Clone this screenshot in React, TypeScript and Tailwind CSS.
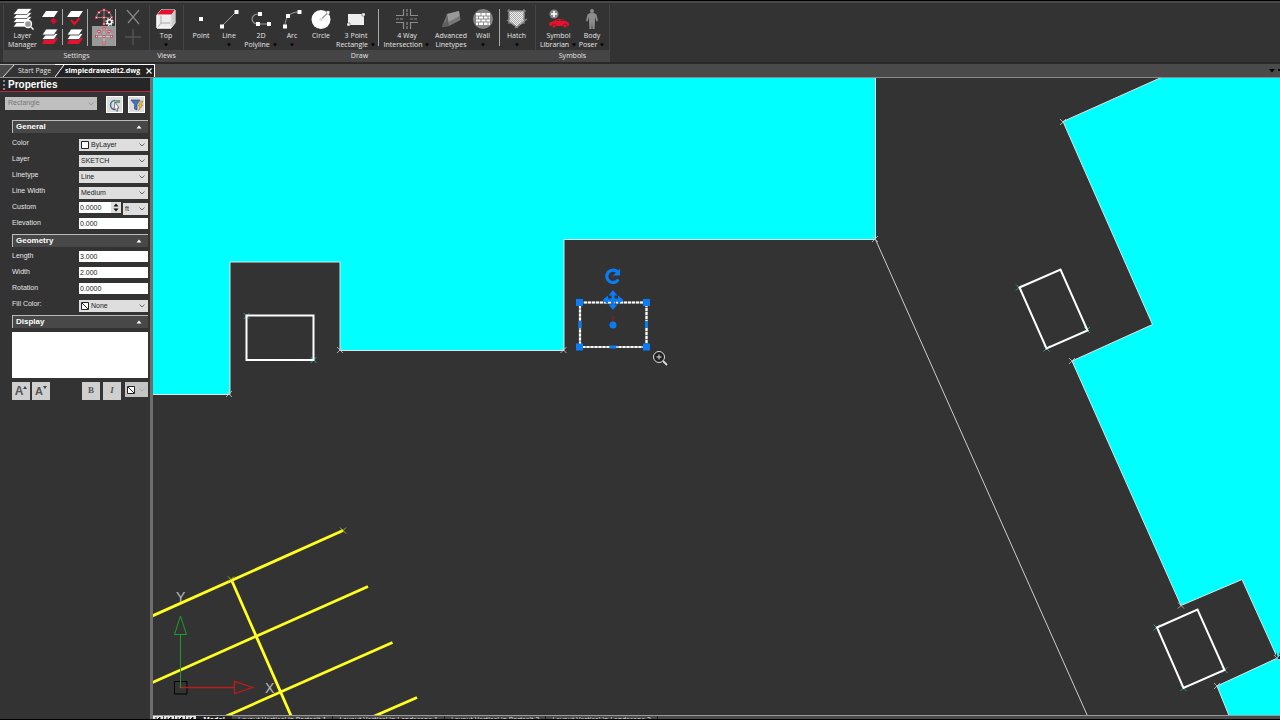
import type { ReactNode } from 'react';

const MARK = 'M-3 -3L3 3M3 -3L-3 3';

/* ---------- ribbon ---------- */

function DropArrow() {
  return (
    <svg viewBox="0 0 6 4" className="h-1 w-1.5 shrink-0" aria-hidden="true">
      <path d="M1 0.500h4L3 3.500z" fill="#000" />
    </svg>
  );
}

interface RibbonButtonProps {
  width: string;
  lines: string[];
  drop?: boolean;
  children: ReactNode;
}

function RibbonButton({ width, lines, drop, children }: RibbonButtonProps) {
  return (
    <button type="button" className={`flex shrink-0 flex-col items-center pt-0.5 text-[7px] leading-[9px] font-medium ${width}`}>
      <span className="flex h-6 items-center justify-center">{children}</span>
      <span className="whitespace-nowrap">{lines[0]}</span>
      <span className="flex h-[9px] items-center justify-center gap-0.5 whitespace-nowrap">
        {lines[1]}
        {drop && <DropArrow />}
      </span>
    </button>
  );
}

function RibbonGroup({ title, width, pad, children }: { title: string; width: string; pad?: boolean; children: ReactNode }) {
  return (
    <section className={`flex shrink-0 flex-col border-r border-[#454545] ${width}`}>
      <div className={`flex h-[45px] items-start ${pad ? 'pl-1' : ''}`}>{children}</div>
      <h2 className="h-3 bg-[#454545] text-center text-[7px] leading-[11px] font-medium">{title}</h2>
    </section>
  );
}

function Separator() {
  return <span className="mx-0.5 mt-1 h-[37px] w-px shrink-0 bg-[#a8a8a8]" />;
}

function Sheets({ badge }: { badge: 'diamond' | 'check' | 'bands' }) {
  return (
    <svg viewBox="0 0 18 18" className="size-[18px]" aria-hidden="true">
      {badge === 'bands' ? (
        <>
          <path d="M4 10h13l-4 6H1z" fill="#e8112d" />
          <path d="M5 5.500h12l-4 6H1z" fill="#fff" stroke="#333" strokeWidth="0.800" />
          <path d="M5 1h12l-4 6H1z" fill="#fff" stroke="#333" strokeWidth="0.800" />
        </>
      ) : (
        <path d="M5 3h12l-4 6H1z" fill="#fff" />
      )}
      {badge === 'diamond' && <path d="M12.500 9.500l3.500 3.500-3.500 3.500L9 13z" fill="#c8102e" />}
      {badge === 'check' && <path d="M5 12l3.500 4 5-6" fill="none" stroke="#e8112d" strokeWidth="2" />}
    </svg>
  );
}

function SnapArc({ gear }: { gear?: boolean }) {
  return (
    <svg viewBox="0 0 20 20" className="size-5" aria-hidden="true">
      <path d="M2.500 10.500C3 1 17 1 17.500 10.500M2.500 10.500h15M10 3v14" fill="none" stroke={gear ? '#888' : '#c4c4c4'} strokeWidth="1" />
      <g fill="#fff" stroke="#e0304a" strokeWidth="0.800">
        <rect x="9" y="2" width="2" height="2" />
        <rect x="4" y="4.500" width="2" height="2" />
        <rect x="14" y="4.500" width="2" height="2" />
        <rect x="1.500" y="9.500" width="2" height="2" />
        <rect x="9" y="9.500" width="2" height="2" />
        <rect x="16.500" y="9.500" width="2" height="2" />
        <rect x="9" y="16" width="2" height="2" />
      </g>
      {gear && (
        <>
          <circle cx="15.500" cy="15" r="4.500" fill="#333" />
          <circle cx="15.500" cy="15" r="2.200" fill="none" stroke="#fff" strokeWidth="1.500" />
          <circle cx="15.500" cy="15" r="3.500" fill="none" stroke="#fff" strokeWidth="1.200" strokeDasharray="1.400 1.350" />
        </>
      )}
    </svg>
  );
}

function Ribbon() {
  return (
    <header className="flex h-[57px] overflow-hidden pl-[3px] text-[#e6e6e6]">
      <RibbonGroup title="Settings" width="w-[147px] border-l">
        <RibbonButton width="w-[37px]" lines={['Layer', 'Manager']}>
          <svg viewBox="0 0 22 22" className="size-[22px]" aria-hidden="true">
            <g fill="#fff" stroke="#333" strokeWidth="0.700">
              <path d="M6 12.500h14l-5 6.500H1z" />
              <path d="M6 8.500h14l-5 6H1z" />
              <path d="M6 4.500h14l-5 6H1z" />
              <path d="M6 0.500h14l-5 6H1z" />
            </g>
            <circle cx="16" cy="16" r="3.500" fill="#999" stroke="#fff" strokeWidth="1.300" />
            <path d="M18.500 18.500l3 3" stroke="#fff" strokeWidth="1.500" />
          </svg>
        </RibbonButton>
        <div className="flex flex-col pt-0.5">
          <button type="button" aria-label="New layer" className="h-5 w-[19px]"><Sheets badge="diamond" /></button>
          <button type="button" aria-label="Layer stack" className="h-5 w-[19px]"><Sheets badge="bands" /></button>
        </div>
        <div className="mx-0.5 flex flex-col gap-1 pt-1">
          <span className="h-4 w-px bg-[#a8a8a8]" />
          <span className="h-4 w-px bg-[#a8a8a8]" />
        </div>
        <div className="flex w-5 flex-col items-center pt-0.5">
          <button type="button" aria-label="Set current layer" className="h-5"><Sheets badge="check" /></button>
          <button type="button" aria-label="Match layer" className="h-5"><Sheets badge="bands" /></button>
        </div>
        <Separator />
        <div className="ml-0.5 flex w-[23px] flex-col items-center pt-0.5">
          <button type="button" aria-label="Snap settings" className="h-[19px]"><SnapArc gear /></button>
          <button type="button" aria-label="Toggle snaps" aria-pressed="true" className="flex h-5 w-full justify-center bg-[#999]">
            <SnapArc />
          </button>
        </div>
        <span className="mt-1 h-[37px] w-px bg-[#a8a8a8]" />
        <div className="flex grow flex-col items-center gap-1 pt-1">
          <button type="button" aria-label="Trim">
            <svg viewBox="0 0 16 16" className="size-4" aria-hidden="true">
              <path d="M2 1l12 14M14 1L3 14" stroke="#888" strokeWidth="1.200" />
            </svg>
          </button>
          <button type="button" aria-label="Crosshair">
            <svg viewBox="0 0 16 16" className="size-4" aria-hidden="true">
              <path d="M8 0v16M0 8h16" stroke="#606060" strokeWidth="1" />
            </svg>
          </button>
        </div>
      </RibbonGroup>

      <RibbonGroup title="Views" width="w-[34px]">
        <RibbonButton width="w-[32px]" lines={['Top']} drop>
          <svg viewBox="0 0 20 20" className="size-5" aria-hidden="true">
            <path d="M5 1h14v13l-4 5H1V6z" fill="#eee" stroke="#fff" />
            <path d="M5 1h14l-4 5H1z" fill="#e8112d" />
            <path d="M15 6l4-5v13l-4 5z" fill="#ccc" />
            <path d="M5 6v8h10M5 14l-4 5M15 6v13" fill="none" stroke="#999" strokeWidth="0.800" />
            <path d="M1 6h14v13H1z" fill="none" stroke="#fff" />
          </svg>
        </RibbonButton>
      </RibbonGroup>

      <RibbonGroup title="Draw" width="w-[352px]" pad>
        <RibbonButton width="w-[26px]" lines={['Point']}>
          <svg viewBox="0 0 8 8" className="size-2" aria-hidden="true"><path d="M2 2h4v4H2z" fill="#fff" /></svg>
        </RibbonButton>
        <RibbonButton width="w-[30px]" lines={['Line']} drop>
          <svg viewBox="0 0 20 20" className="size-5" aria-hidden="true">
            <path d="M3 17L17 3" stroke="#999" />
            <path d="M1 15.500h4v4H1zM15.500 1h4v4h-4z" fill="#fff" />
          </svg>
        </RibbonButton>
        <RibbonButton width="w-[34px]" lines={['2D', 'Polyline']} drop>
          <svg viewBox="0 0 20 20" className="size-5" aria-hidden="true">
            <path d="M8 5C-1 5-1 15 7 15h10" fill="none" stroke="#999" strokeWidth="1.200" />
            <path d="M7 3h4v4H7zM5 13h4v4H5zM16 13h4v4h-4z" fill="#fff" />
          </svg>
        </RibbonButton>
        <RibbonButton width="w-[28px]" lines={['Arc']} drop>
          <svg viewBox="0 0 20 20" className="size-5" aria-hidden="true">
            <path d="M3 17C3 8 8 3 17 3" fill="none" stroke="#999" />
            <path d="M1 15.500h4v4H1zM4 5h4v4H4zM15.500 1h4v4h-4z" fill="#fff" />
          </svg>
        </RibbonButton>
        <RibbonButton width="w-[30px]" lines={['Circle']}>
          <svg viewBox="0 0 20 20" className="size-5" aria-hidden="true">
            <circle cx="10" cy="10.500" r="9.500" fill="#fff" />
            <path d="M10 10.500l7-7" stroke="#999" strokeWidth="1.200" />
            <path d="M8.500 9h3v3h-3z" fill="#ddd" />
            <path d="M15.500 2h3v3h-3z" fill="#fff" stroke="#888" strokeWidth="0.500" />
          </svg>
        </RibbonButton>
        <RibbonButton width="w-[40px]" lines={['3 Point', 'Rectangle']} drop>
          <svg viewBox="0 0 20 16" className="h-4 w-5" aria-hidden="true">
            <path d="M2 3h16v11H2z" fill="#eee" />
            <path d="M1 12h3v3H1zM16 2h3v3h-3z" fill="#fff" stroke="#333" strokeWidth="0.500" />
          </svg>
        </RibbonButton>
        <Separator />
        <RibbonButton width="w-[52px]" lines={['4 Way', 'Intersection']} drop>
          <svg viewBox="0 0 22 22" className="size-[22px]" aria-hidden="true">
            <path d="M0 7.500h7.500V1M14.500 1v6.500H22M0 14.500h7.500V21M14.500 21v-6.500H22" fill="none" stroke="#8c8c8c" strokeWidth="1.200" />
            <path d="M0 11h8M14 11h8M11 1v7M11 14v7" stroke="#8c8c8c" strokeWidth="1.200" strokeDasharray="3 1" />
          </svg>
        </RibbonButton>
        <RibbonButton width="w-[36px]" lines={['Advanced', 'Linetypes']}>
          <svg viewBox="0 0 20 18" className="h-[18px] w-5" aria-hidden="true">
            <path d="M6 4l12-3 1.500 9L8 16l-7 1z" fill="#777" />
            <path d="M6 4l12-3 .5 5-11 6z" fill="#999" />
            <path d="M1 17l1-4 3-1 1-8 2 12z" fill="#606060" />
          </svg>
        </RibbonButton>
        <RibbonButton width="w-[28px]" lines={['Wall']} drop>
          <svg viewBox="0 0 20 20" className="size-5" aria-hidden="true">
            <circle cx="10" cy="10" r="10" fill="#858585" />
            <path d="M3 4h14v12H3z" fill="#fff" />
            <path d="M3 7h14M3 10h14M3 13h14M8 4v3M13 4v3M5.500 7v3M10.500 7v3M15 7v3M8 10v3M13 10v3M5.500 13v3M10.500 13v3M15 13v3" stroke="#777" strokeWidth="0.800" />
          </svg>
        </RibbonButton>
        <Separator />
        <RibbonButton width="w-[29px]" lines={['Hatch']} drop>
          <svg viewBox="0 0 22 22" className="size-[22px]" aria-hidden="true">
            <defs>
              <pattern id="checks" width="2" height="2" patternUnits="userSpaceOnUse">
                <path d="M0 0h2v2H0z" fill="#eee" />
                <path d="M0 0h1v1H0zM1 1h1v1H1z" fill="#aaa" />
              </pattern>
            </defs>
            <path d="M3 3h15v11l-7 5-8-5z" fill="url(#checks)" stroke="#999" />
            <path d="M1 3h19M3 1v16M18 1v15M1 12l11 8M9 20l12-9" fill="none" stroke="#888" strokeWidth="1.200" strokeDasharray="3 1" />
          </svg>
        </RibbonButton>
      </RibbonGroup>

      <RibbonGroup title="Symbols" width="w-[74px]" pad>
        <RibbonButton width="w-[37px]" lines={['Symbol', 'Librarian']} drop>
          <svg viewBox="0 0 22 22" className="size-[22px]" aria-hidden="true">
            <circle cx="6" cy="6" r="4.500" fill="#888" />
            <path d="M6 3v6M3 6h6" stroke="#fff" strokeWidth="1.600" />
            <path d="M1 16c0-2 3-2.500 5-3 3-3 8-3 11 0 3 .3 4 1.500 4 4v1H2z" fill="#e8112d" />
            <path d="M8 13c1-1 2-1.500 3-1.500V13zM12.500 11.500c1.500 0 2.500.8 3.500 1.500h-3.500z" fill="#333" />
            <circle cx="6" cy="18" r="2" fill="#e8112d" stroke="#333" strokeWidth="0.700" />
            <circle cx="17" cy="18" r="2" fill="#e8112d" stroke="#333" strokeWidth="0.700" />
          </svg>
        </RibbonButton>
        <RibbonButton width="w-[30px]" lines={['Body', 'Poser']} drop>
          <svg viewBox="0 0 14 22" className="h-[22px] w-3.5" aria-hidden="true">
            <circle cx="7" cy="3" r="2" fill="#8c8c8c" />
            <path d="M5 5h4l2.500 1.500L13 13l-1.500.5L10 9v4l-.5 8h-2L7 15l-.5 6h-2L4 13V9l-1.500 4.500L1 13l1.500-6.500z" fill="#8c8c8c" />
          </svg>
        </RibbonButton>
      </RibbonGroup>
    </header>
  );
}

function DocumentTabs() {
  return (
    <nav className="flex h-3.5 items-stretch border-b border-[#8a8a8a] bg-[#4a4a4a] text-[7px] leading-3 text-[#e6e6e6]">
      <button type="button" className="flex w-[55px] items-stretch border-t border-[#aaa] bg-[#333]">
        <svg viewBox="0 0 16 12" className="h-3 w-4 shrink-0 bg-[#4a4a4a]" aria-hidden="true">
          <path d="M3 12L14 0h2v12z" fill="#333" />
          <path d="M3 12L14 0" stroke="#ddd" />
        </svg>
        <span className="pl-0.5 whitespace-nowrap">Start Page</span>
      </button>
      <div className="flex items-stretch border-t border-r border-white bg-[#222] font-bold text-white">
        <svg viewBox="0 0 10 12" className="h-3 w-2.5 shrink-0 bg-[#333]" aria-hidden="true">
          <path d="M0 12L9 0h1v12z" fill="#222" />
          <path d="M0 12L9 0" stroke="#fff" />
        </svg>
        <button type="button" className="w-[78px] text-left whitespace-nowrap">simpledrawedit2.dwg</button>
        <button type="button" aria-label="Close tab" className="flex w-[11px] items-center justify-center">
          <svg viewBox="0 0 6 6" className="size-1.5" aria-hidden="true">
            <path d="M.5.5l5 5M5.500.5l-5 5" stroke="#fff" strokeWidth="1.200" />
          </svg>
        </button>
      </div>
      <button type="button" aria-label="Open documents" className="ml-auto flex items-center pt-px">
        <svg viewBox="0 0 12 6" className="h-1.5 w-3" aria-hidden="true">
          <path d="M1 1h6L4 4.500zM10 1h2v2h-2z" fill="#000" />
        </svg>
      </button>
    </nav>
  );
}

/* ---------- properties panel ---------- */

function Section({ title, children }: { title: string; children: ReactNode }) {
  return (
    <section>
      <h3 className="flex h-[13px] items-center justify-between border-t border-l border-[#bbb] bg-[#484848] pr-1.5 pl-[3px] text-[8px] leading-3 font-bold text-white">
        {title}
        <svg viewBox="0 0 6 4" className="h-1 w-1.5" aria-hidden="true"><path d="M3 0.500L5.500 3.500h-5z" fill="#fff" /></svg>
      </h3>
      <div className="pt-1">{children}</div>
    </section>
  );
}

function Row({ label, id, children }: { label: string; id: string; children: ReactNode }) {
  return (
    <div className="flex h-4 items-start">
      <label htmlFor={id} className="w-[67px] shrink-0 leading-[9px] text-[#e6e6e6]">{label}</label>
      <div className="flex min-w-0 grow">{children}</div>
    </div>
  );
}

function Swatch({ none }: { none?: boolean }) {
  return (
    <svg viewBox="0 0 8 8" className="pointer-events-none absolute inset-y-0 left-0.5 my-auto size-2" aria-hidden="true">
      <path d="M.5.5h7v7h-7z" fill="#fff" stroke="#222" />
      {none && <path d="M1 1l6 6" stroke="#222" />}
    </svg>
  );
}

function Chevron({ stroke }: { stroke: string }) {
  return (
    <svg viewBox="0 0 6 4" className="pointer-events-none absolute inset-y-0 right-[3px] my-auto h-1 w-1.5" aria-hidden="true">
      <path d="M.5.5L3 3 5.500.5" fill="none" stroke={stroke} />
    </svg>
  );
}

function Select({ id, value, swatch, label }: { id: string; value: string; swatch?: 'white' | 'none'; label?: string }) {
  return (
    <div className="relative mt-px h-3 min-w-0 grow">
      <select
        id={id}
        aria-label={label}
        defaultValue={value}
        className={`block h-3 w-full appearance-none bg-[#dedede] text-[#222] ${swatch ? 'pl-3' : 'pl-0.5'}`}
      >
        <option>{value}</option>
      </select>
      {swatch && <Swatch none={swatch === 'none'} />}
      <Chevron stroke="#666" />
    </div>
  );
}

function TextField({ id, value }: { id: string; value: string }) {
  return <input id={id} defaultValue={value} className="h-[11px] w-full min-w-0 bg-white px-px text-[#222] outline-none" />;
}

function PropertiesPanel() {
  return (
    <aside className="w-[150px] shrink-0 bg-[#333] font-['Liberation_Sans',Arial,sans-serif] text-[7px]">
      <div className="flex h-3.5 items-center gap-[3px] border-b border-[#c8203c] bg-[#262626] pl-[3px]">
        <span className="h-2.5 border-l-2 border-dotted border-[#888]" />
        <h2 className="text-[10px] leading-3 font-bold text-white">Properties</h2>
      </div>
      <div className="flex h-7 items-start pt-1 pl-[5px]">
        <div className="relative mt-px h-[13px] w-[92px]">
          <select aria-label="Selected object" disabled defaultValue="Rectangle" className="block h-[13px] w-full appearance-none bg-[#bfbfbf] pl-[3px] text-[#777]">
            <option>Rectangle</option>
          </select>
          <Chevron stroke="#999" />
        </div>
        <button type="button" aria-label="Select objects" className="ml-[9px] flex size-[17px] items-center justify-center border border-white bg-[#ddd]">
          <svg viewBox="0 0 14 14" className="size-3.5" aria-hidden="true">
            <path d="M7 2.500a4.500 4.500 0 100 9" fill="none" stroke="#526a94" strokeWidth="1.500" />
            <path d="M7 2h5v3H8z" fill="#65a577" />
            <path d="M7 4l4 6-2 .3 1 2.500-1.500.4-1-2.500L6 12z" fill="#fff" stroke="#345" strokeWidth="0.700" />
          </svg>
        </button>
        <button type="button" aria-label="Quick select" className="ml-[5px] flex size-[17px] items-center justify-center border border-white bg-[#ddd]">
          <svg viewBox="0 0 14 14" className="size-3.5" aria-hidden="true">
            <path d="M1 2h9L7 6.500V12l-2.500-1V6.500z" fill="#4775b5" stroke="#274a80" strokeWidth="0.700" />
            <path d="M11 3L8 8h2l-1.500 4.500L13 7h-2l2-4z" fill="#efb83b" stroke="#9c7624" strokeWidth="0.500" />
          </svg>
        </button>
      </div>

      <div className="pr-0.5 pl-3">
        <Section title="General">
          <div className="pt-px">
            <Row label="Color" id="color"><Select id="color" value="ByLayer" swatch="white" /></Row>
            <Row label="Layer" id="layer"><Select id="layer" value="SKETCH" /></Row>
            <Row label="Linetype" id="linetype"><Select id="linetype" value="Line" /></Row>
            <Row label="Line Width" id="line-width"><Select id="line-width" value="Medium" /></Row>
            <Row label="Custom" id="custom">
              <div className="w-8 shrink-0"><TextField id="custom" value="0.0000" /></div>
              <button type="button" aria-label="Step custom width" className="mr-0.5 flex h-[11px] w-2.5 shrink-0 items-center justify-center bg-[#dedede]">
                <svg viewBox="0 0 6 9" className="h-[9px] w-1.5" aria-hidden="true">
                  <path d="M3 0.500L5.500 3.500h-5zM.5 5.500h5L3 8.500z" fill="#111" />
                </svg>
              </button>
              <Select id="custom-unit" value="ft" label="Custom width unit" />
            </Row>
            <Row label="Elevation" id="elevation"><TextField id="elevation" value="0.000" /></Row>
          </div>
        </Section>
        <Section title="Geometry">
          <Row label="Length" id="length"><TextField id="length" value="3.000" /></Row>
          <Row label="Width" id="width"><TextField id="width" value="2.000" /></Row>
          <Row label="Rotation" id="rotation"><TextField id="rotation" value="0.0000" /></Row>
          <Row label="Fill Color:" id="fill"><Select id="fill" value="None" swatch="none" /></Row>
        </Section>
        <Section title="Display">
          <textarea aria-label="Display text" className="block h-[46px] w-full resize-none bg-white" />
          <div className="flex items-start pt-1 font-bold text-[#555]">
            <button type="button" aria-label="Increase text size" className="flex size-[18px] items-center justify-center bg-[#cfcfcf] text-[12px] leading-3">
              A
              <svg viewBox="0 0 4 10" className="h-2.5 w-1" aria-hidden="true"><path d="M2 0l2 3H0z" fill="#444" /></svg>
            </button>
            <button type="button" aria-label="Decrease text size" className="ml-0.5 flex size-[18px] items-center justify-center bg-[#cfcfcf] text-[11px] leading-3">
              A
              <svg viewBox="0 0 4 10" className="h-2.5 w-1" aria-hidden="true"><path d="M0 0h4L2 3z" fill="#444" /></svg>
            </button>
            <button type="button" aria-label="Bold" className="ml-auto size-[18px] bg-[#cfcfcf] font-['Liberation_Serif',serif] text-[9px]">B</button>
            <button type="button" aria-label="Italic" className="ml-[3px] size-[18px] bg-[#cfcfcf] font-['Liberation_Serif',serif] text-[9px] italic">I</button>
            <button type="button" aria-label="Text color" className="relative ml-1 h-[15px] w-[23px] bg-[#c4c4c4]">
              <Swatch none />
              <Chevron stroke="#aaa" />
            </button>
          </div>
        </Section>
      </div>
    </aside>
  );
}

/* ---------- drawing ---------- */

function Marks({ points, stroke }: { points: number[][]; stroke: string }) {
  return (
    <g stroke={stroke} strokeWidth="0.800">
      {points.map(([x, y]) => (
        <path key={`${x}-${y}`} d={MARK} transform={`translate(${x} ${y})`} />
      ))}
    </g>
  );
}

function Drawing() {
  return (
    <svg viewBox="153 78 1127 637" preserveAspectRatio="xMinYMin slice" className="block size-full" role="img" aria-label="Site plan">
      <g fill="#0ff" stroke="#d8e8e8" strokeWidth="1">
        <path d="M150 70H875.500V239.500H564V350.500H340V262H230V394.500H150z" />
        <path d="M1178 70L1063 121.500l89.500 203L1072 361l109 244.500 61-26 35.500 78.500L1217 686l13 32h60V70z" />
      </g>
      <path d="M875.500 239.500L1088 717" stroke="#ccc" strokeWidth="1" />
      <path d="M1276 652l2 6 2-6v7h-4z" fill="#123" />
      <Marks stroke="#ccc" points={[[229, 394], [340, 350], [563.500, 350], [875, 239], [1063, 122], [1072, 361], [1181, 605.500], [1217, 686], [1277, 658]]} />
      <Marks stroke="#30b8a8" points={[[246.500, 316], [313.500, 360], [1019, 287.500], [1087, 330], [1046.500, 348.500], [1156.500, 627.500], [1224.500, 670], [1183.500, 688]]} />

      <g fill="none" stroke="#fff" strokeWidth="2">
        <path d="M246.500 315.500h67v44.500h-67z" />
        <path d="M1019.500 287.500l41-18 27 61-41 18z" />
        <path d="M1157 627.500l40.500-18 27 60.500-41 18z" />
      </g>

      <path
        d="M150 617L343 530.500M150 683.500L368 586.500M222 718L392.500 642.500M370 718L417 697.500M231.500 580L292 718"
        stroke="#ff2"
        strokeWidth="2.800"
      />
      <Marks stroke="#cc2" points={[[343, 530.500], [231, 579.500]]} />

      {/* axis indicator */}
      <g fill="none">
        <path d="M174.500 681.500h12.500v12.500h-12.500z" stroke="#000" />
        <path d="M180.500 688V634.500M180.500 616l-6 18.500h12z" stroke="#1f9d2c" />
        <path d="M181 687.500h53M234.500 681.500v12l18-6z" stroke="#b81c1c" strokeWidth="1.300" />
      </g>
      <g fill="#bbb" className="font-['Liberation_Sans',Arial,sans-serif] text-[14px]">
        <text x="176" y="602">Y</text>
        <text x="265" y="693">X</text>
      </g>

      {/* selected rectangle with its grips */}
      <path d="M580 302.500h66.500v44.500H580z" fill="none" stroke="#777" strokeWidth="2.200" />
      <path d="M580 302.500h66.500v44.500H580z" fill="none" stroke="#fff" strokeWidth="2.200" strokeDasharray="3 1" />
      <path d="M613 316v7M613 275v3" stroke="#a02020" />
      <g fill="#0a7df5">
        <path d="M576 299h7v7h-7zM643 299h7v7h-7zM576 343.500h7v7h-7zM643 343.500h7v7h-7z" />
        <path d="M578.500 321h3v7h-3zM645 321h3v7h-3zM609.500 345.500h7v3h-7z" />
        <circle cx="613" cy="325" r="3.500" />
        <path d="M613 290l4.500 5.500h-3v3h3.500V295.500l5.500 4.500-5.500 4.500v-3h-3.500v3h3L613 310l-4.500-5.500h3v-3H608v3L602.500 300l5.500-4.500v3h3.500v-3h-3z" />
        <path d="M613 275.500h7V268.500z" />
      </g>
      <path d="M617.500 272a6.200 6.200 0 1 0 .8 7.500" fill="none" stroke="#0a7df5" strokeWidth="3.200" />

      {/* zoom cursor */}
      <g fill="none" stroke="#ddd">
        <circle cx="659" cy="357" r="5.500" fill="#222" />
        <path d="M659 354.500v5M656.500 357h5" />
        <path d="M663 361l4 4" strokeWidth="1.800" />
      </g>
    </svg>
  );
}

const LAYOUTS = ['Layout Vertical in Portrait 1', 'Layout Vertical in Landscape 1', 'Layout Vertical in Portrait 2', 'Layout Vertical in Landscape 2'];

// The strip is pushed under the window edge, so just the tops of its tabs show.
function LayoutTabs() {
  return (
    <nav className="flex h-1 shrink-0 items-start overflow-hidden border-t border-[#999] bg-[#4a4a4a] text-[7px] leading-[7px] text-[#ddd]">
      <div className="flex gap-px">
        {['First', 'Previous', 'Next', 'Last'].map((name) => (
          <button key={name} type="button" aria-label={`${name} layout`} className="h-2 w-2.5 bg-[#e8e8e8]">
            <svg viewBox="0 0 10 8" className="h-2 w-2.5" aria-hidden="true"><path d="M3 1v6M7 1L4 4l3 3z" fill="#222" stroke="#222" /></svg>
          </button>
        ))}
      </div>
      <button type="button" className="w-9 shrink-0 bg-[#262626] font-bold text-white">Model</button>
      {LAYOUTS.map((name) => (
        <button key={name} type="button" className="shrink-0 border-r border-[#222] px-1.5 whitespace-nowrap">{name}</button>
      ))}
    </nav>
  );
}

export default function App() {
  return (
    <div className="flex h-screen flex-col overflow-hidden border-y border-black bg-[#333] font-['Open_Sans','Noto_Sans',sans-serif]">
      <div className="mb-0.5 h-0.5 shrink-0 bg-[#484848]" />
      <Ribbon />
      <div className="h-0.5 shrink-0 bg-[#292929]" />
      <DocumentTabs />
      <div className="flex min-h-0 grow">
        <PropertiesPanel />
        <div className="w-[3px] shrink-0 bg-[#6e6e6e]" />
        <main className="flex min-w-0 grow flex-col">
          <div className="min-h-0 grow basis-0 overflow-hidden">
            <Drawing />
          </div>
          <LayoutTabs />
        </main>
      </div>
    </div>
  );
}
